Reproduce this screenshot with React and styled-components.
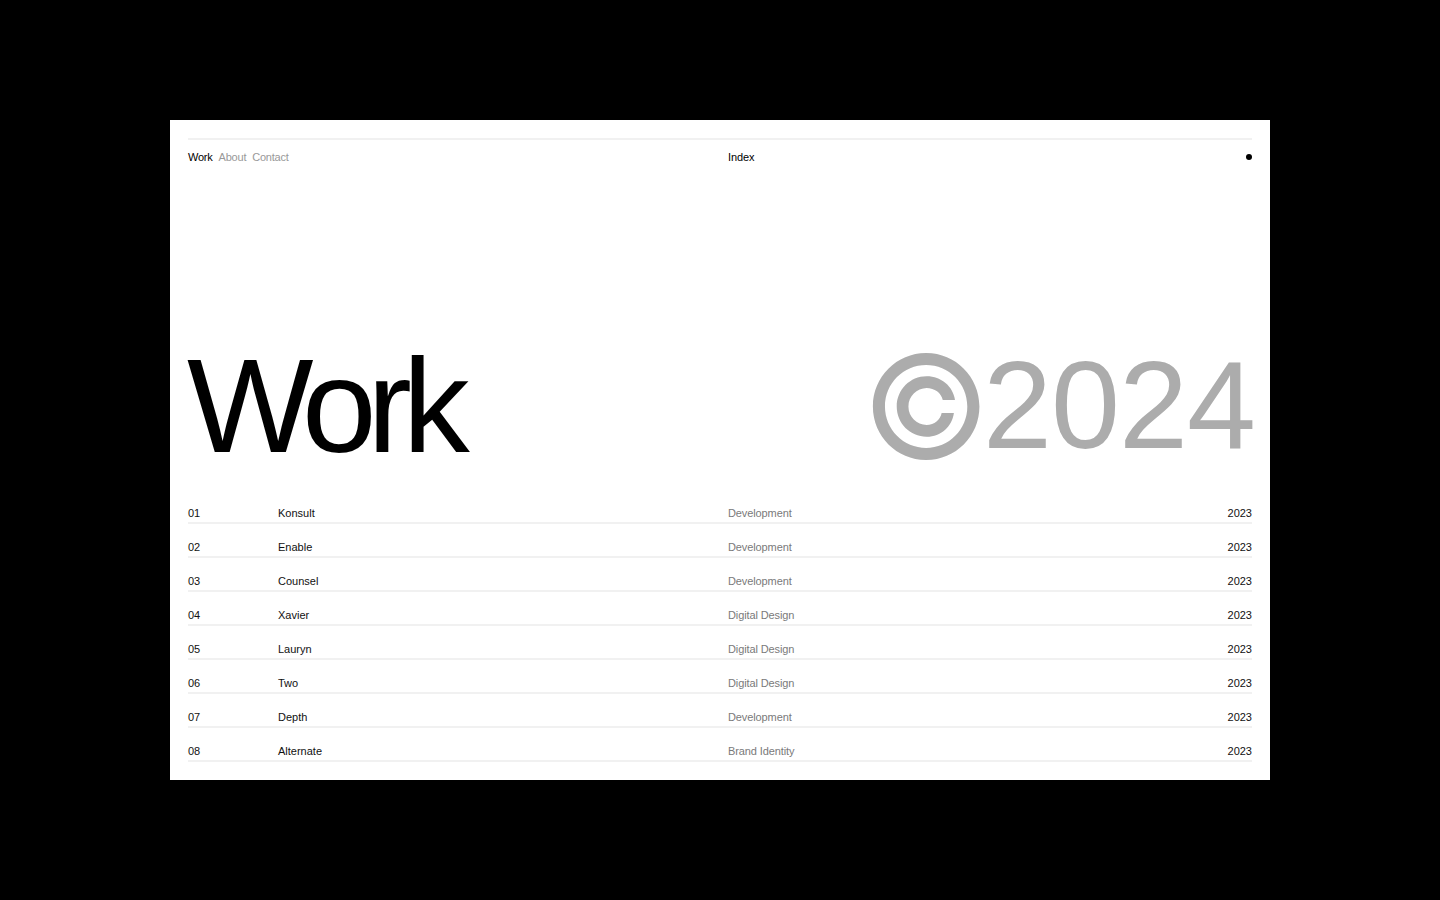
import React from "react";
import styled, { createGlobalStyle } from "styled-components";

const Global = createGlobalStyle`
  html, body { margin: 0; padding: 0; background: #000; }
  body { font-family: "Liberation Sans", Arial, sans-serif; -webkit-font-smoothing: antialiased; }
`;

const Stage = styled.div`
  width: 1440px;
  height: 900px;
  display: flex;
  align-items: center;
  justify-content: center;
  background: #000;
`;

const Panel = styled.main`
  width: 1100px;
  height: 660px;
  box-sizing: border-box;
  padding: 18px;
  background: #fff;
  display: flex;
  flex-direction: column;
`;

const Grid12 = styled.div`
  display: grid;
  grid-template-columns: repeat(12, 1fr);
  column-gap: 16px;
`;

const Header = styled(Grid12)`
  border-top: 2px solid #f1f1f1;
  padding-top: 11px;
  font-size: 11px;
  line-height: 13px;
  align-items: center;
`;

const Nav = styled.nav`
  grid-column: 1 / 7;
  display: flex;
  gap: 6px;
  letter-spacing: -0.02em;
`;

const NavLink = styled.a`
  color: ${(p) => (p.$active ? "#000" : "#999")};
  text-decoration: none;
`;

const Index = styled.div`
  grid-column: 7 / 12;
  color: #000;
  letter-spacing: -0.01em;
`;

const DotCell = styled.div`
  grid-column: 12 / 13;
  display: flex;
  justify-content: flex-end;
`;

const Dot = styled.span`
  width: 6px;
  height: 6px;
  border-radius: 50%;
  background: #000;
  margin-top: -1px;
`;

const Hero = styled.section`
  flex: 1;
  display: flex;
  justify-content: space-between;
  align-items: flex-end;
  padding-bottom: 17px;
`;

const Title = styled.h1`
  margin: 0;
  font-weight: 400;
  font-size: 134px;
  line-height: 135px;
  letter-spacing: -0.068em;
  color: #000;
  margin-left: -1px;
`;

const Year = styled.div`
  font-size: 124px;
  line-height: 135px;
  letter-spacing: -0.008em;
  color: #acacac;
  white-space: nowrap;
  margin-right: -3px;
`;

const Copy = styled.span`
  font-family: Inter, "Liberation Sans", sans-serif;
  font-weight: 400;
  font-size: 142px;
  letter-spacing: 0;
  display: inline-block;
  vertical-align: -10px;
  line-height: 100px;
  margin-right: -8px;
`;

const List = styled.ul`
  list-style: none;
  margin: 0;
  padding: 0;
`;

const Row = styled(Grid12).attrs({ as: "li" })`
  height: 34px;
  box-sizing: border-box;
  align-items: end;
  padding-bottom: 2px;
  border-bottom: 2px solid #f1f1f1;
  font-size: 11px;
  line-height: 13px;
  color: #111;
`;

const Num = styled.span`
  grid-column: 1 / 2;
`;

const Name = styled.span`
  grid-column: 2 / 7;
`;

const Cat = styled.span`
  grid-column: 7 / 12;
  color: #7a7a7a;
  letter-spacing: -0.01em;
`;

const RowYear = styled.span`
  grid-column: 12 / 13;
  text-align: right;
`;

const projects = [
  ["01", "Konsult", "Development"],
  ["02", "Enable", "Development"],
  ["03", "Counsel", "Development"],
  ["04", "Xavier", "Digital Design"],
  ["05", "Lauryn", "Digital Design"],
  ["06", "Two", "Digital Design"],
  ["07", "Depth", "Development"],
  ["08", "Alternate", "Brand Identity"],
];

export default function App() {
  return (
    <Stage>
      <Global />
      <Panel>
        <Header>
          <Nav>
            <NavLink $active href="#">Work</NavLink>
            <NavLink href="#">About</NavLink>
            <NavLink href="#">Contact</NavLink>
          </Nav>
          <Index>Index</Index>
          <DotCell>
            <Dot />
          </DotCell>
        </Header>
        <Hero>
          <Title>Work</Title>
          <Year>
            <Copy>©</Copy>2024
          </Year>
        </Hero>
        <List>
          {projects.map(([n, name, cat]) => (
            <Row key={n}>
              <Num>{n}</Num>
              <Name>{name}</Name>
              <Cat>{cat}</Cat>
              <RowYear>2023</RowYear>
            </Row>
          ))}
        </List>
      </Panel>
    </Stage>
  );
}
